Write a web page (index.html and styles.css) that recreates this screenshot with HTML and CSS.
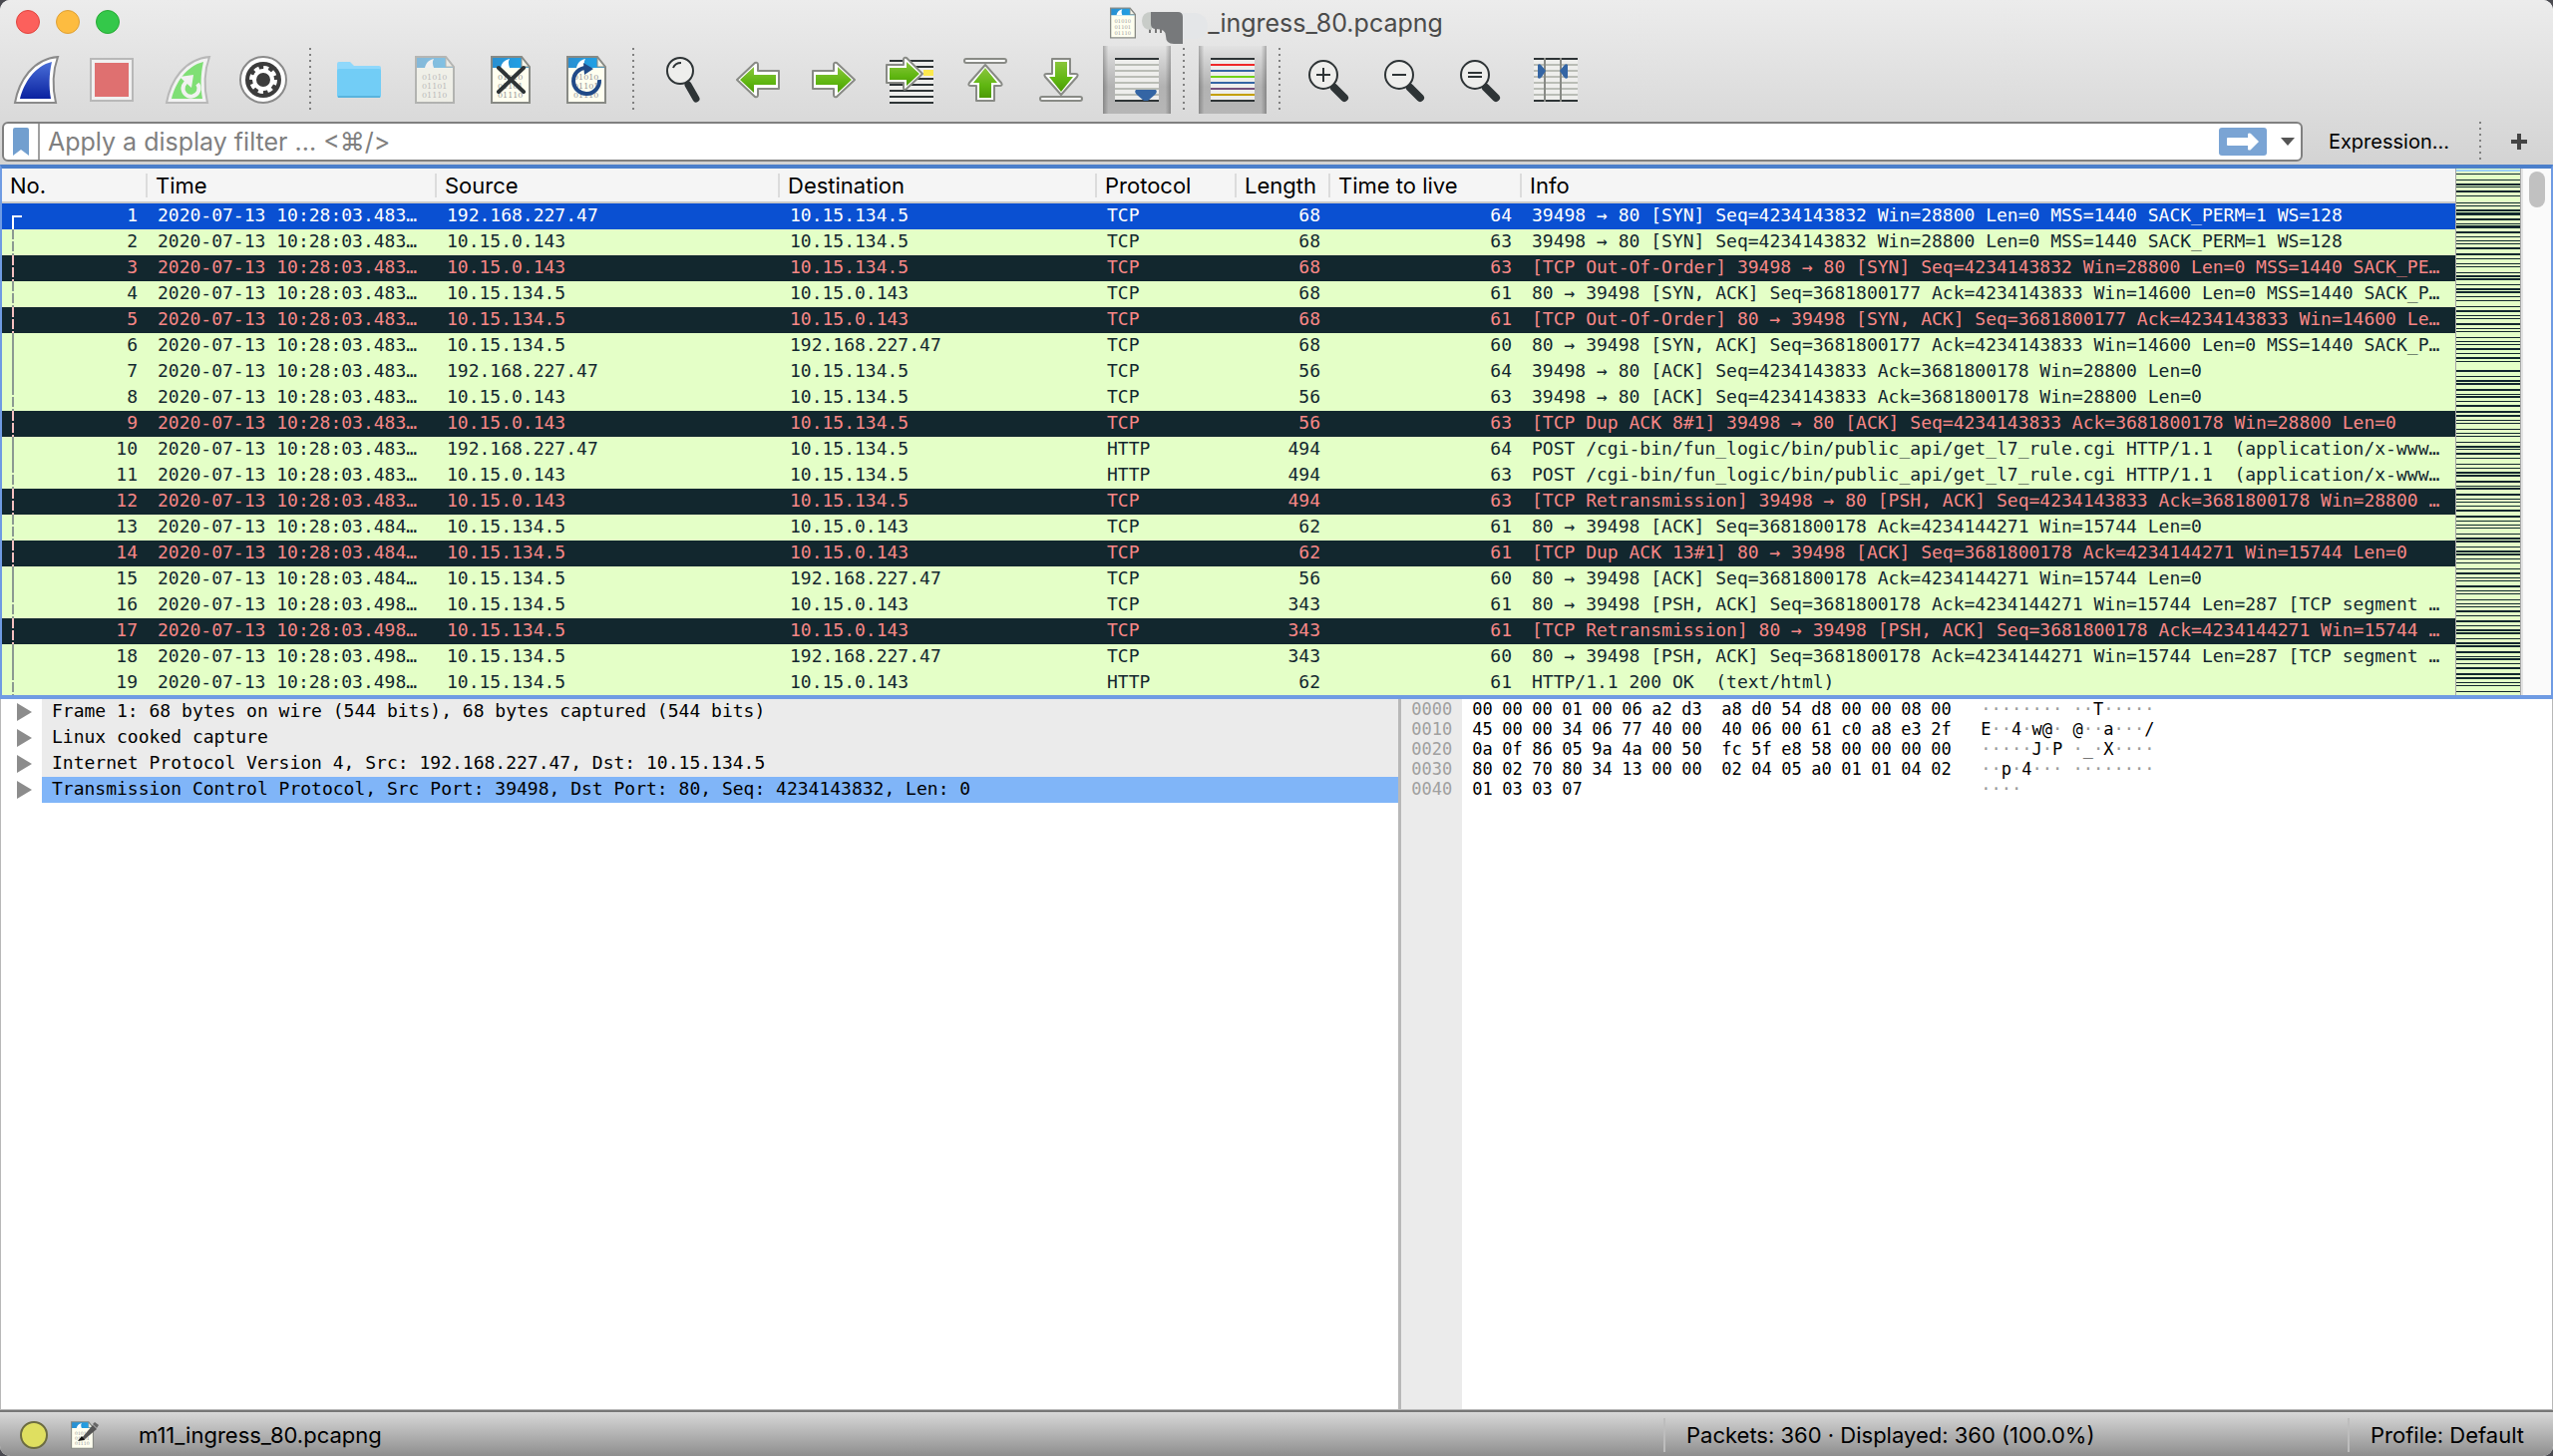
FILE: index.html
```html
<!DOCTYPE html>
<html lang="en">
  <head>
    <meta charset="UTF-8" />
    <meta name="viewport" content="width=device-width, initial-scale=1.0" />
    <title>m11_ingress_80.pcapng</title>
    <link rel="stylesheet" href="styles.css">
  </head>

  <body>
    <svg class="defs" width="0" height="0">
      <defs>
        <linearGradient id="blue" x1="0" y1="0" x2="0" y2="1">
          <stop offset="0" stop-color="#4a6fd8" />
          <stop offset="1" stop-color="#0a22a0" />
        </linearGradient>
        <linearGradient id="green" x1="0" y1="0" x2="0" y2="1">
          <stop offset="0" stop-color="#8ac53c" />
          <stop offset="0.6" stop-color="#5fb611" />
          <stop offset="1" stop-color="#4c9a06" />
        </linearGradient>
        <linearGradient id="sky" x1="0" y1="0" x2="1" y2="0">
          <stop offset="0" stop-color="#2a8fd0" />
          <stop offset="1" stop-color="#1fa5ea" />
        </linearGradient>
        <symbol id="file" viewBox="0 0 40 48">
          <path d="M1 1H31L39 11V47H1Z" fill="#fffff0" />
          <path d="M1 1H31L39 11V12H1Z" fill="url(#sky)" />
          <path d="M10 12C11 7 14 4 19 3C17 6 18 9 19 12Z" fill="#fff" />
          <path d="M31 1V11H39Z" fill="#f4f4e8" stroke="#888a85" />
          <g font-family="DejaVu Serif, serif" font-size="8" fill="#999">
            <text x="7" y="24">01010</text>
            <text x="7" y="33">01101</text>
            <text x="7" y="42">01110</text>
          </g>
          <path d="M1 1H31L39 11V47H1Z" fill="none" stroke="#888a85" stroke-width="2" />
        </symbol>
        <symbol id="lens" viewBox="0 0 68 68">
          <path d="M40 42L50 52" stroke="#2e3436" stroke-width="8" stroke-linecap="round" />
          <circle cx="29" cy="29" r="14" fill="#eeeeec" stroke="#2e3436" stroke-width="2" />
        </symbol>
      </defs>
    </svg>

    <header>
      <div class="titlebar">
        <div class="lights">
          <button class="light close" aria-label="Close"></button>
          <button class="light minimize" aria-label="Minimize"></button>
          <button class="light maximize" aria-label="Zoom"></button>
        </div>
        <h1>
          <svg width="26" height="32"><use href="#file" width="26" height="32" /></svg>
          <svg class="smudge" width="66" height="44" viewBox="0 0 66 44">
            <path d="M8 27V32M14 27V32M19 27V32" stroke="#777" stroke-width="2" />
            <rect x="22" y="12" width="44" height="26" rx="13" fill="#e4e6e8" />
            <path d="M10 11Q0 11 0 20T10 29Z" fill="#c8ccc8" />
            <path d="M9 11H36Q41 11 41 16V43H32Q24 43 24 35Q24 28 14 28Q9 28 9 23Z" fill="#77797b" />
          </svg>
          <span>_ingress_80.pcapng</span>
        </h1>
      </div>

      <div class="toolbar">
        <button aria-label="Start capture">
          <svg viewBox="0 0 68 68">
            <path d="M13 57C17 35 31 13 56 11C51 25 50 40 54 57Z" fill="#fff" stroke="#8a8a8a" stroke-width="2" />
            <path d="M18 53C22 37 33 20 50 16C47 29 47 41 49 53Z" fill="url(#blue)" />
          </svg>
        </button>
        <button aria-label="Stop capture">
          <svg viewBox="0 0 68 68">
            <rect x="13" y="13" width="42" height="42" fill="#f0f0f0" stroke="#b8b8b8" stroke-width="2" />
            <rect x="17" y="17" width="34" height="34" fill="#df7070" />
          </svg>
        </button>
        <button aria-label="Restart capture">
          <svg viewBox="0 0 68 68">
            <path d="M13 57C17 35 31 13 56 11C51 25 50 40 54 57Z" fill="#f2f2f2" stroke="#b8b8b8" stroke-width="2" />
            <path d="M18 53C22 37 33 20 50 16C47 29 47 41 49 53Z" fill="#7fdf75" />
            <path d="M44 38A8 8 0 1 1 30 40L34 34" fill="none" stroke="#f2f2f2" stroke-width="4" />
            <path d="M26 31L40 29L38 42Z" fill="#f2f2f2" />
          </svg>
        </button>
        <button aria-label="Capture options">
          <svg viewBox="0 0 68 68">
            <circle cx="34" cy="34" r="23" fill="#fff" stroke="#8a8a8a" stroke-width="2" />
            <circle cx="34" cy="34" r="18" fill="#3c3c3c" />
            <circle cx="34" cy="34" r="12" fill="none" stroke="#fff" stroke-width="4" stroke-dasharray="5 4.4" />
            <circle cx="34" cy="34" r="9" fill="none" stroke="#fff" stroke-width="4" />
          </svg>
        </button>
        <i class="sep"></i>
        <button aria-label="Open">
          <svg viewBox="0 0 68 68">
            <path d="M12 51V18Q12 16 14 16H25L29 20H54Q56 20 56 22V51Z" fill="#8fd8fb" />
            <rect x="12" y="23" width="44" height="29" rx="2" fill="#72cdf6" />
            <path d="M13 51H55" stroke="#58b4de" stroke-width="2" />
          </svg>
        </button>
        <button aria-label="Save" disabled>
          <svg viewBox="0 0 68 68"><use href="#file" x="14" y="10" width="40" height="48" opacity="0.5" /></svg>
        </button>
        <button aria-label="Close file">
          <svg viewBox="0 0 68 68">
            <use href="#file" x="14" y="10" width="40" height="48" />
            <path d="M22 22L47 46M47 22L22 46" stroke="#2e3436" stroke-width="4" stroke-linecap="round" />
          </svg>
        </button>
        <button aria-label="Reload">
          <svg viewBox="0 0 68 68">
            <use href="#file" x="14" y="10" width="40" height="48" />
            <path d="M47 34A13 13 0 1 1 34 22" fill="none" stroke="#204a87" stroke-width="4" />
            <path d="M31 17L41 23L32 29Z" fill="#204a87" />
          </svg>
        </button>
        <i class="sep"></i>
        <button aria-label="Find packet">
          <svg viewBox="0 0 68 68">
            <path d="M40 39L48 53" stroke="#2e3436" stroke-width="7" stroke-linecap="round" />
            <circle cx="32" cy="25" r="13" fill="#eeeeec" stroke="#2e3436" stroke-width="2" />
            <path d="M25 22Q27 17 33 17" fill="none" stroke="#2e3436" stroke-width="2" />
          </svg>
        </button>
        <button aria-label="Go back">
          <svg viewBox="0 0 68 68">
            <path d="M13 34L31 17Q34 16 34 19V25H55V43H34V49Q34 52 31 51Z" fill="#fff" stroke="#888a85" stroke-width="2" stroke-linejoin="round" />
            <path d="M16 34L30 21V29H52V39H30V47Z" fill="url(#green)" />
          </svg>
        </button>
        <button aria-label="Go forward">
          <svg viewBox="0 0 68 68">
            <path d="M55 34L37 17Q34 16 34 19V25H13V43H34V49Q34 52 37 51Z" fill="#fff" stroke="#888a85" stroke-width="2" stroke-linejoin="round" />
            <path d="M52 34L38 21V29H16V39H38V47Z" fill="url(#green)" />
          </svg>
        </button>
        <button aria-label="Go to packet">
          <svg viewBox="0 0 68 68">
            <path d="M14 14H58V58H14Z" fill="#eeeeec" />
            <path d="M48 24H58V30H48Z" fill="#fce94f" />
            <path d="M14 15H58M14 21H58M14 33H58M14 39H58M14 45H58M14 51H58M14 57H58" stroke="#2e3436" stroke-width="2" />
            <path d="M47 28L31 12Q28 11 28 14V19H11V37H28V42Q28 45 31 43Z" fill="#fff" stroke="#888a85" stroke-width="2" stroke-linejoin="round" />
            <path d="M44 28L31 16V22H14V34H31V40Z" fill="url(#green)" />
          </svg>
        </button>
        <button aria-label="First packet">
          <svg viewBox="0 0 68 68">
            <rect x="13" y="13" width="42" height="4" rx="2" fill="#fff" stroke="#888a85" stroke-width="2" />
            <path d="M34 19L50 37Q52 40 48 40H43V55H25V40H20Q16 40 18 37Z" fill="#fff" stroke="#888a85" stroke-width="2" stroke-linejoin="round" />
            <path d="M34 22L46 37H40V52H28V37H22Z" fill="url(#green)" />
          </svg>
        </button>
        <button aria-label="Last packet">
          <svg viewBox="0 0 68 68">
            <rect x="13" y="51" width="42" height="4" rx="2" fill="#fff" stroke="#888a85" stroke-width="2" />
            <path d="M34 49L50 31Q52 28 48 28H43V13H25V28H20Q16 28 18 31Z" fill="#fff" stroke="#888a85" stroke-width="2" stroke-linejoin="round" />
            <path d="M34 46L46 31H40V16H28V31H22Z" fill="url(#green)" />
          </svg>
        </button>
        <button class="pressed" aria-label="Auto scroll">
          <svg viewBox="0 0 68 68">
            <path d="M12 12H56V56H12Z" fill="#eeeeec" />
            <path d="M12 19H56M12 25H56M12 31H56M12 37H56M12 43H56M12 49H56" stroke="#babdb6" stroke-width="2" />
            <path d="M12 13H56M12 55H56" stroke="#2e3436" stroke-width="2" />
            <path d="M33 44H53Q55 46 52 49L45 55H41L34 49Q31 46 33 44Z" fill="#3465a4" />
          </svg>
        </button>
        <i class="sep"></i>
        <button class="pressed" aria-label="Colorize">
          <svg viewBox="0 0 68 68">
            <path d="M12 12H56V56H12Z" fill="#eeeeec" />
            <g stroke-width="2">
              <path d="M12 13H56M12 55H56" stroke="#2e3436" />
              <path d="M12 19H56" stroke="#ef2929" />
              <path d="M12 25H56M12 37H56" stroke="#3465a4" />
              <path d="M12 31H56" stroke="#73d216" />
              <path d="M12 43H56" stroke="#75507b" />
              <path d="M12 49H56" stroke="#c4a000" />
            </g>
          </svg>
        </button>
        <i class="sep"></i>
        <button aria-label="Zoom in">
          <svg viewBox="0 0 68 68"><use href="#lens" width="68" height="68" /><path d="M22 29H36M29 22V36" stroke="#2e3436" stroke-width="2" /></svg>
        </button>
        <button aria-label="Zoom out">
          <svg viewBox="0 0 68 68"><use href="#lens" width="68" height="68" /><path d="M22 29H36" stroke="#2e3436" stroke-width="2" /></svg>
        </button>
        <button aria-label="Normal size">
          <svg viewBox="0 0 68 68"><use href="#lens" width="68" height="68" /><path d="M22 27H36M22 31H36" stroke="#2e3436" stroke-width="2" /></svg>
        </button>
        <button aria-label="Resize columns">
          <svg viewBox="0 0 68 68">
            <path d="M12 12H56V56H12Z" fill="#eeeeec" />
            <path d="M12 19H56M12 25H56M12 31H56M12 37H56M12 43H56M12 49H56" stroke="#babdb6" stroke-width="2" />
            <path d="M12 13H56M12 55H56" stroke="#2e3436" stroke-width="2" />
            <path d="M23 12V56M39 12V56" stroke="#888a85" stroke-width="2" />
            <path d="M16 19Q18 17 20 20L24 25L20 31Q18 34 16 32ZM46 19Q44 17 42 20L38 25L42 31Q44 34 46 32Z" fill="#3465a4" />
          </svg>
        </button>
      </div>

      <div class="filter-bar">
        <div class="filter">
          <button class="bookmark" aria-label="Bookmarks">
            <svg width="16" height="28"><path d="M0 2Q0 0 2 0H14Q16 0 16 2V28L8 22L0 28Z" fill="#729fcf" /></svg>
          </button>
          <input type="text" aria-label="Display filter" placeholder="Apply a display filter ... &lt;⌘/&gt;" />
          <button class="apply" aria-label="Apply filter">
            <svg width="48" height="28"><path d="M9 10H29V6Q31 5 32 6L40 14L32 22Q31 23 29 22V18H9Q8 18 8 17V11Q8 10 9 10Z" fill="#fff" /></svg>
          </button>
          <button class="recent" aria-label="Recent filters">
            <svg width="14" height="8"><path d="M0 0H14L7 8Z" fill="#555" /></svg>
          </button>
        </div>
        <button class="expression">Expression…</button>
        <i class="sep"></i>
        <button class="plus" aria-label="Add filter button">
          <svg width="16" height="16"><path d="M0 8H16M8 0V16" stroke="#444" stroke-width="4" /></svg>
        </button>
      </div>
    </header>

    <main>
      <section class="packets">
        <div class="list">
          <table>
            <colgroup>
              <col class="c-no" /><col class="c-time" /><col class="c-src" /><col class="c-dst" />
              <col class="c-proto" /><col class="c-len" /><col class="c-ttl" /><col />
            </colgroup>
            <thead>
              <tr>
                <th>No.</th>
                <th>Time</th>
                <th>Source</th>
                <th>Destination</th>
                <th>Protocol</th>
                <th>Length</th>
                <th>Time to live</th>
                <th>Info</th>
              </tr>
            </thead>
            <tbody id="rows"></tbody>
          </table>
        </div>
        <svg id="map" class="map"></svg>
        <div class="scroll"><div class="thumb"></div></div>
      </section>

      <section class="panes">
        <ul class="tree">
          <li><button aria-label="Expand"></button><span>Frame 1: 68 bytes on wire (544 bits), 68 bytes captured (544 bits)</span></li>
          <li><button aria-label="Expand"></button><span>Linux cooked capture</span></li>
          <li><button aria-label="Expand"></button><span>Internet Protocol Version 4, Src: 192.168.227.47, Dst: 10.15.134.5</span></li>
          <li class="selected"><button aria-label="Expand"></button><span>Transmission Control Protocol, Src Port: 39498, Dst Port: 80, Seq: 4234143832, Len: 0</span></li>
        </ul>
        <div class="hex">
          <table>
            <tbody id="bytes"></tbody>
          </table>
        </div>
      </section>
    </main>

    <footer>
      <div class="status-file">
        <svg width="28" height="28"><circle cx="14" cy="14" r="13" fill="#dfdf60" stroke="#6c6c42" stroke-width="2" /></svg>
        <svg class="edit" width="28" height="28" viewBox="0 0 28 28">
          <use href="#file" width="23" height="28" />
          <path d="M11 17L22 4L26 8L13 19Z" fill="#555" />
          <path d="M24 1L28 4L26 7L22 3Z" fill="#666" />
          <path d="M7 20L11 15L14 19Z" fill="#111" />
        </svg>
        <span>m11_ingress_80.pcapng</span>
      </div>
      <div class="status-packets">Packets: 360 · Displayed: 360 (100.0%)</div>
      <div class="status-profile">Profile: Default</div>
    </footer>

    <script>
      const A = "192.168.227.47";
      const B = "10.15.0.143";
      const C = "10.15.134.5";

      // time, source, destination, protocol, length, ttl, info
      const packets = [
        ["483", A, C, "TCP", 68, 64, "39498 → 80 [SYN] Seq=4234143832 Win=28800 Len=0 MSS=1440 SACK_PERM=1 WS=128"],
        ["483", B, C, "TCP", 68, 63, "39498 → 80 [SYN] Seq=4234143832 Win=28800 Len=0 MSS=1440 SACK_PERM=1 WS=128"],
        ["483", B, C, "TCP", 68, 63, "[TCP Out-Of-Order] 39498 → 80 [SYN] Seq=4234143832 Win=28800 Len=0 MSS=1440 SACK_PE…"],
        ["483", C, B, "TCP", 68, 61, "80 → 39498 [SYN, ACK] Seq=3681800177 Ack=4234143833 Win=14600 Len=0 MSS=1440 SACK_P…"],
        ["483", C, B, "TCP", 68, 61, "[TCP Out-Of-Order] 80 → 39498 [SYN, ACK] Seq=3681800177 Ack=4234143833 Win=14600 Le…"],
        ["483", C, A, "TCP", 68, 60, "80 → 39498 [SYN, ACK] Seq=3681800177 Ack=4234143833 Win=14600 Len=0 MSS=1440 SACK_P…"],
        ["483", A, C, "TCP", 56, 64, "39498 → 80 [ACK] Seq=4234143833 Ack=3681800178 Win=28800 Len=0"],
        ["483", B, C, "TCP", 56, 63, "39498 → 80 [ACK] Seq=4234143833 Ack=3681800178 Win=28800 Len=0"],
        ["483", B, C, "TCP", 56, 63, "[TCP Dup ACK 8#1] 39498 → 80 [ACK] Seq=4234143833 Ack=3681800178 Win=28800 Len=0"],
        ["483", A, C, "HTTP", 494, 64, "POST /cgi-bin/fun_logic/bin/public_api/get_l7_rule.cgi HTTP/1.1  (application/x-www…"],
        ["483", B, C, "HTTP", 494, 63, "POST /cgi-bin/fun_logic/bin/public_api/get_l7_rule.cgi HTTP/1.1  (application/x-www…"],
        ["483", B, C, "TCP", 494, 63, "[TCP Retransmission] 39498 → 80 [PSH, ACK] Seq=4234143833 Ack=3681800178 Win=28800 …"],
        ["484", C, B, "TCP", 62, 61, "80 → 39498 [ACK] Seq=3681800178 Ack=4234144271 Win=15744 Len=0"],
        ["484", C, B, "TCP", 62, 61, "[TCP Dup ACK 13#1] 80 → 39498 [ACK] Seq=3681800178 Ack=4234144271 Win=15744 Len=0"],
        ["484", C, A, "TCP", 56, 60, "80 → 39498 [ACK] Seq=3681800178 Ack=4234144271 Win=15744 Len=0"],
        ["498", C, B, "TCP", 343, 61, "80 → 39498 [PSH, ACK] Seq=3681800178 Ack=4234144271 Win=15744 Len=287 [TCP segment …"],
        ["498", C, B, "TCP", 343, 61, "[TCP Retransmission] 80 → 39498 [PSH, ACK] Seq=3681800178 Ack=4234144271 Win=15744 …"],
        ["498", C, A, "TCP", 343, 60, "80 → 39498 [PSH, ACK] Seq=3681800178 Ack=4234144271 Win=15744 Len=287 [TCP segment …"],
        ["498", C, B, "HTTP", 62, 61, "HTTP/1.1 200 OK  (text/html)"],
      ];

      document.getElementById("rows").innerHTML = packets
        .map(([ms, src, dst, proto, len, ttl, info], i) => {
          const classes = [];
          if (i === 0) classes.push("current");
          if (info.startsWith("[TCP")) classes.push("bad");
          if (src === A || dst === A) classes.push("stream");
          return `<tr class="${classes.join(" ")}">
            <td class="num">${i + 1}</td><td>2020-07-13 10:28:03.${ms}…</td><td>${src}</td><td>${dst}</td>
            <td>${proto}</td><td class="num">${len}</td><td class="num">${ttl}</td><td>${info}</td></tr>`;
        })
        .join("");

      // overview strip: top of each dark line
      const thin = [
        4, 10, 17, 26, 33, 36, 45, 54, 58, 67, 71, 74, 89, 94, 97, 103, 115, 127, 131, 137, 146, 149,
        159, 162, 168, 172, 175, 184, 192, 207, 225, 232, 251, 254, 260, 264, 267, 273, 280, 289, 295,
        299, 317, 330, 333, 337, 352, 356, 359, 365, 378, 390, 394, 400, 409, 412, 422, 425, 431, 435,
        438, 447, 457, 470, 488, 495, 514, 517, 523,
      ];
      const thick = [
        14, 21, 40, 43, 49, 56, 62, 78, 84, 106, 109, 119, 122, 141, 154, 179, 188, 201, 211, 214, 220,
        227, 236, 242, 246, 277, 284, 303, 306, 312, 319, 325, 341, 347, 369, 372, 382, 385, 404, 417,
        442, 452, 461, 464, 474, 477, 483, 490, 499, 505, 509,
      ];
      const line = (y, h) => `<rect y="${y + 1}" width="66" height="${h}" />`;
      document.getElementById("map").innerHTML =
        `<rect class="pos" y="1" width="66" height="2" />` +
        thin.map((y) => line(y, 1)).join("") +
        thick.map((y) => line(y, 2)).join("");

      const dump = [
        ["0000", "00 00 00 01 00 06 a2 d3 a8 d0 54 d8 00 00 08 00", "········ ··T·····"],
        ["0010", "45 00 00 34 06 77 40 00 40 06 00 61 c0 a8 e3 2f", "E··4·w@· @··a···/"],
        ["0020", "0a 0f 86 05 9a 4a 00 50 fc 5f e8 58 00 00 00 00", "·····J·P ·_·X····"],
        ["0030", "80 02 70 80 34 13 00 00 02 04 05 a0 01 01 04 02", "··p·4··· ········"],
        ["0040", "01 03 03 07", "····"],
      ];

      document.getElementById("bytes").innerHTML = dump
        .map(([offset, hex, ascii]) => {
          const bytes = hex.split(" ");
          while (bytes.length < 16) bytes.push("");
          return `<tr><th>${offset}</th>${bytes.map((b) => `<td>${b}</td>`).join("")}<td class="ascii">${ascii.replace(/·+/g, "<i>$&</i>")}</td></tr>`;
        })
        .join("");
    </script>
  </body>
</html>
```

FILE: styles.css
```css
* {
  box-sizing: border-box;
}

html {
  background-color: #4a4a50;
}

body {
  display: flex;
  flex-direction: column;
  height: 100vh;
  margin: 0;
  overflow: hidden;
  border-radius: 10px;
  background-color: white;
  font-family: Inter, "DejaVu Sans", sans-serif;
  font-size: 22px;
  color: black;
}

.defs {
  position: absolute;
}

button {
  display: flex;
  align-items: center;
  justify-content: center;
  padding: 0;
  border: 0;
  background: none;
  font: inherit;
  color: inherit;
}

header {
  background: linear-gradient(#ececec, #d3d3d3);
}

/* title bar */

.titlebar {
  display: grid;
  grid-template-columns: 1fr auto 1fr;
  height: 46px;
}

.lights {
  display: flex;
  gap: 16px;
  padding: 10px 16px;
}

.light {
  width: 24px;
  height: 24px;
  border-radius: 50%;
}

.close {
  background-color: #fc605c;
  border: 1px solid #e0443e;
}

.minimize {
  background-color: #fdbc40;
  border: 1px solid #dea035;
}

.maximize {
  background-color: #34c84a;
  border: 1px solid #27aa35;
}

h1 {
  display: flex;
  align-items: center;
  margin: 0;
  font-size: 25px;
  font-weight: 400;
  color: #4b4b4b;
}

.smudge {
  margin-left: 6px;
}

/* toolbar */

.toolbar {
  display: flex;
  gap: 8px;
  padding-left: 2px;
}

.toolbar button,
.toolbar button svg {
  width: 68px;
  height: 68px;
}

.toolbar .pressed {
  background: linear-gradient(to right, rgba(0, 0, 0, 0.25), transparent 8%, transparent 92%, rgba(0, 0, 0, 0.25)),
    linear-gradient(#e2e2e2, #b2b2b2 60%, #b6b6b6);
}

.sep {
  width: 2px;
  margin: 2px 6px 4px 4px;
  background: repeating-linear-gradient(#808080 0 2px, transparent 2px 6px);
}

.filter-bar {
  display: flex;
  align-items: center;
  padding: 8px 26px 3px 2px;
}

.filter {
  display: flex;
  flex: 1;
  align-items: center;
  height: 40px;
  border: 2px solid #808080;
  border-radius: 6px;
  background-color: white;
}

.bookmark {
  width: 36px;
  height: 36px;
  border-right: 2px solid #a0a0a0;
}

.filter input {
  flex: 1;
  min-width: 0;
  padding: 0 8px;
  border: 0;
  outline: 0;
  font: inherit;
  font-size: 25px;
}

.filter input::placeholder {
  color: #7f7f7f;
}

.apply {
  width: 48px;
  height: 28px;
  border-radius: 3px;
  background-color: #7aa4d4;
}

.recent {
  width: 26px;
  margin-left: 8px;
}

.expression {
  padding: 0 26px;
  font-size: 20px;
}

.filter-bar .sep {
  height: 40px;
  margin: 0 30px 0 4px;
}

/* packet list */

main {
  display: flex;
  flex: 1;
  flex-direction: column;
  min-height: 0;
}

.packets {
  display: flex;
  flex: 0 0 536px;
  overflow: hidden;
  border: 2px solid #6f9be3;
  border-width: 4px 2px;
  border-top-color: #4b7fcb;
}

.list {
  flex: 1;
  overflow: hidden;
}

table {
  border-spacing: 0;
}

.list table {
  width: 100%;
  table-layout: fixed;
}

.c-no {
  width: 146px;
}

.c-time {
  width: 290px;
}

.c-src {
  width: 344px;
}

.c-dst {
  width: 318px;
}

.c-proto {
  width: 140px;
}

.c-len {
  width: 94px;
}

.c-ttl {
  width: 192px;
}

.list th {
  height: 35px;
  padding: 0 8px;
  border-bottom: 2px solid #c8c8c8;
  background: linear-gradient(#dcdcdc, #dcdcdc) right 5px / 2px 24px no-repeat #f5f5f5;
  font-size: 22px;
  font-weight: 400;
  line-height: 26px;
  text-align: left;
  white-space: nowrap;
}

.list th:last-child {
  background: #f5f5f5;
}

.list td {
  height: 26px;
  padding: 0 10px 2px;
  overflow: hidden;
  font-family: "DejaVu Sans Mono", monospace;
  font-size: 18px;
  line-height: 24px;
  white-space: pre;
}

.list .num {
  text-align: right;
}

.list tbody tr {
  background-color: #e4ffc7;
  color: #12272e;
}

.list tbody .bad {
  background-color: #12272e;
  color: #f78787;
}

.list tbody .current {
  background-color: #0a50d2;
  color: white;
}

/* conversation line in the first column */
.list td:first-child {
  background: repeating-linear-gradient(#8b9a92 0 10px, transparent 10px 12px, #8b9a92 12px 22px, transparent 22px 24px, #8b9a92 24px 26px) 10px 0 / 2px 26px no-repeat;
}

.list .bad td:first-child {
  background-image: repeating-linear-gradient(#f5c0c0 0 10px, transparent 10px 12px, #f5c0c0 12px 22px, transparent 22px 24px, #f5c0c0 24px 26px);
}

.list .stream td:first-child {
  background-image: linear-gradient(#8b9a92, #8b9a92);
}

.list .current td:first-child {
  background: linear-gradient(white, white) 10px 12px / 2px 14px no-repeat,
    linear-gradient(white, white) 10px 12px / 10px 2px no-repeat;
}

.map {
  flex: none;
  width: 66px;
  height: 100%;
  border: 1px solid #a8a8a8;
  border-width: 0 1px;
  background-color: #e4ffc7;
  fill: #12272e;
}

.map .pos {
  fill: #9fd0f5;
}

.scroll {
  flex: none;
  width: 30px;
  padding: 3px 0 0 6px;
  border-left: 2px solid #e4e4e4;
  background-color: #fafafa;
}

.thumb {
  width: 16px;
  height: 36px;
  border-radius: 8px;
  background-color: #c1c1c1;
}

/* details and bytes */

.panes {
  display: flex;
  flex: 1;
  border: 1px solid #b8b8b8;
  border-top: 0;
  font-family: "DejaVu Sans Mono", monospace;
}

.tree {
  flex: 1403;
  margin: 0;
  padding: 0;
  list-style-type: none;
  font-size: 18px;
  line-height: 24px;
}

.tree li {
  display: flex;
}

.tree button {
  width: 41px;
  padding-left: 6px;
}

.tree button::before {
  content: "";
  border: 9px solid transparent;
  border-left: 15px solid #8c8c8c;
  border-right: 0;
}

.tree span {
  flex: 1;
  padding: 0 0 2px 10px;
  background-color: #ebebeb;
}

.tree .selected span {
  background-color: #80b5f8;
}

.hex {
  flex: 1155;
  border-left: 3px solid #b8b8b8;
  background: linear-gradient(to right, #ebebeb 61px, white 61px);
}

.hex th,
.hex td {
  min-width: 30px;
  height: 20px;
  padding: 0;
  font-size: 17px;
  font-weight: 400;
  line-height: 20px;
  text-align: left;
  white-space: pre;
}

.hex th {
  min-width: 71px;
  padding-left: 10px;
  color: #a0a0a0;
}

.hex td:nth-child(9) {
  min-width: 40px;
}

.hex .ascii {
  padding-left: 20px;
}

.hex i {
  font-style: normal;
  color: #999;
}

/* status bar */

footer {
  display: flex;
  align-items: center;
  height: 46px;
  padding-top: 2px;
  border-top: 2px solid #777;
  background: linear-gradient(#d8d8d8, #8e8e8e);
}

.status-file {
  display: flex;
  flex: 1;
  align-items: center;
  padding-left: 20px;
}

.edit {
  margin: 0 40px 0 23px;
}

.status-packets,
.status-profile {
  padding-left: 21px;
  border-left: 2px solid #bdbdbd;
  line-height: 34px;
}

.status-packets {
  width: 686px;
}

.status-profile {
  width: 206px;
}
```
